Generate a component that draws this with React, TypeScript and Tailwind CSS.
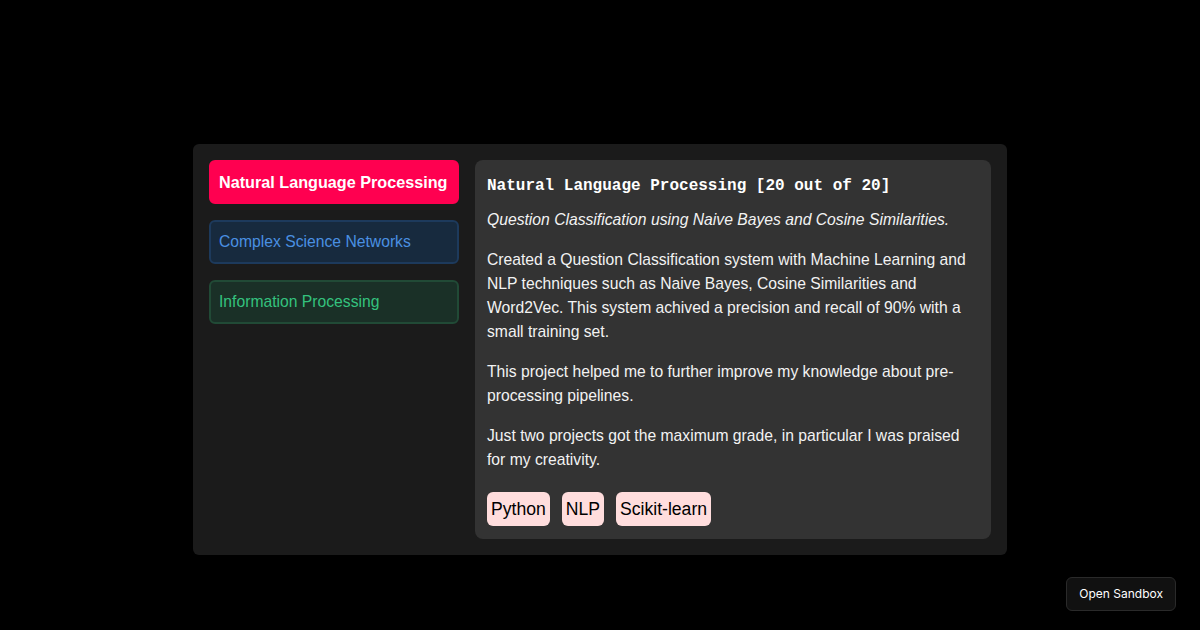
import React, { useState } from 'react';

const projects = [
  {
    name: 'Natural Language Processing',
    style: 'bg-[#ff0050] border-[#ff0050] text-white font-bold text-[16.2px]',
  },
  {
    name: 'Complex Science Networks',
    style: 'bg-[#172a3e] border-[#1d3a5c] text-[#4a90e2] text-[15.7px]',
  },
  {
    name: 'Information Processing',
    style: 'bg-[#1a3027] border-[#214a36] text-[#34c27e] text-[15.7px]',
  },
];

export default function App() {
  const [selected, setSelected] = useState(0);

  return (
    <div className="min-h-[630px] bg-black pt-[144px] font-['Liberation_Sans',Arial,sans-serif]">
      <div className="mx-auto flex w-[814px] gap-4 rounded-md bg-[#1b1b1b] p-4">
        <div className="flex w-[250px] shrink-0 flex-col gap-4">
          {projects.map((p, i) => (
            <button
              key={p.name}
              onClick={() => setSelected(i)}
              className={`h-[44px] rounded-md border-2 px-2 text-left ${p.style} ${selected === i ? '' : ''}`}
            >
              {p.name}
            </button>
          ))}
        </div>
        <div className="flex-1 rounded-lg bg-[#333333] px-3 pt-[14px] pb-[13px] text-[15.7px] leading-6 text-[#f2f2f2]">
          <h2 className="font-['Liberation_Mono',monospace] text-base font-bold text-white">
            Natural Language Processing [20 out of 20]
          </h2>
          <p className="mt-[10px] italic">Question Classification using Naive Bayes and Cosine Similarities.</p>
          <p className="mt-4">
            Created a Question Classification system with Machine Learning and NLP techniques such as Naive Bayes, Cosine
            Similarities and Word2Vec. This system achived a precision and recall of 90% with a small training set.
          </p>
          <p className="mt-4">This project helped me to further improve my knowledge about pre-processing pipelines.</p>
          <p className="mt-4">
            Just two projects got the maximum grade, in particular I was praised for my creativity.
          </p>
          <div className="mt-5 flex gap-3">
            {['Python', 'NLP', 'Scikit-learn'].map(t => (
              <span key={t} className="rounded-md bg-[#ffdddd] px-1 py-[5px] text-[17.6px] leading-6 text-black">
                {t}
              </span>
            ))}
          </div>
        </div>
      </div>
      <button className="absolute right-[24px] bottom-[19px] h-[34px] rounded-md border border-[#2a2a2a] bg-[#111111] px-3 font-['Inter',sans-serif] text-xs text-white">
        Open Sandbox
      </button>
    </div>
  );
}
